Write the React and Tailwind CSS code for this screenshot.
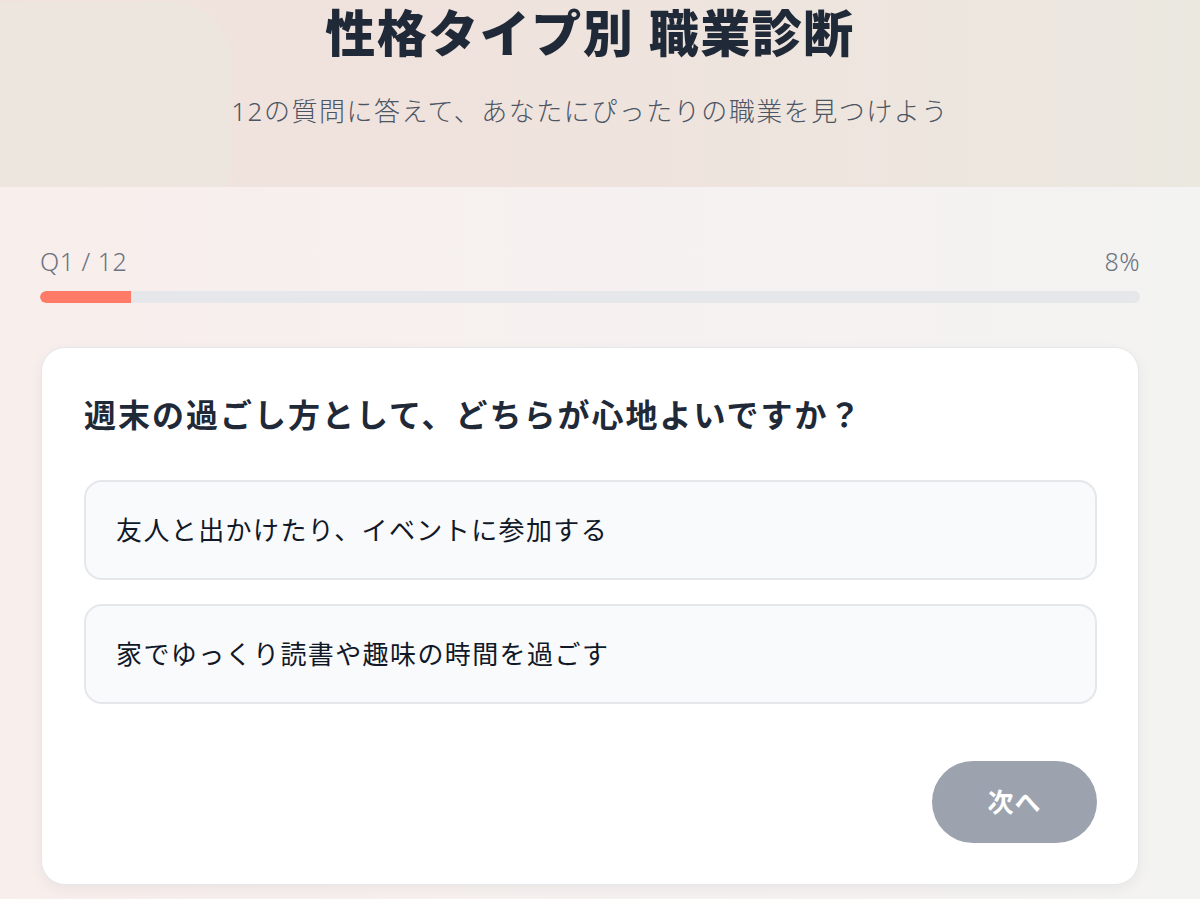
import React from "react";

const FONT = { fontFamily: '"Noto Sans", "Noto Sans CJK JP", sans-serif' };

export default function App() {
  return (
    <div
      className="min-h-[899px] w-full bg-gradient-to-r from-[#f8eeec] via-[#f6f1f0] to-[#f3f3f2] text-[#1f2937]"
      style={FONT}
    >
      <header className="relative overflow-hidden h-[187px] bg-gradient-to-r from-[#f1e2dc] via-[#efe3dd] to-[#ebe8e0]">
        <div className="absolute left-[-40px] top-[2px] h-[200px] w-[272px] rounded-tr-[60px] rounded-br-[40px] bg-[#ece6df]" />
        <div className="relative ml-[40px] w-[1100px] flex flex-col items-center pt-[3px]">
          <h1 className="text-[50px] leading-[60px] font-extrabold tracking-[1.5px] text-[#1f2937]">
            性格タイプ別 職業診断
          </h1>
          <p className="mt-[28px] text-[26px] leading-[40px] font-light tracking-[1.5px] text-[#4b5563]">
            12の質問に答えて、あなたにぴったりの職業を見つけよう
          </p>
        </div>
      </header>

      <main className="px-[40px] pt-[58px] pb-[15px] w-[1180px]">
        <div className="w-[1100px]">
          <div className="flex justify-between text-[25px] leading-[32px] font-light tracking-[0.5px] text-[#6b7280]">
            <span>Q1 / 12</span>
            <span>8%</span>
          </div>
          <div className="mt-[14px] h-[12px] w-full rounded-full bg-[#e5e7eb] overflow-hidden">
            <div className="h-full rounded-l-full bg-[#ff7b68]" style={{ width: "8.3%" }} />
          </div>

          <div className="mt-[44px] ml-[1px] w-[1098px] rounded-[24px] border border-[#e5e7eb] bg-white pt-[43px] pb-[41px] pl-[42px] pr-[41px] shadow-[0_4px_14px_rgba(0,0,0,0.05)]">
            <h2 className="text-[32px] leading-[48px] font-bold tracking-[2px] text-[#1f2937]">
              週末の過ごし方として、どちらが心地よいですか？
            </h2>
            <div className="mt-[41px] flex flex-col gap-[24px]">
              <button className="h-[100px] w-full rounded-[18px] border-2 border-[#e5e7eb] bg-[#f9fafb] pl-[30px] text-left text-[26px] font-normal tracking-[1.4px] text-[#111827]">
                友人と出かけたり、イベントに参加する
              </button>
              <button className="h-[100px] w-full rounded-[18px] border-2 border-[#e5e7eb] bg-[#f9fafb] pl-[30px] text-left text-[26px] font-normal tracking-[1.4px] text-[#111827]">
                家でゆっくり読書や趣味の時間を過ごす
              </button>
            </div>
            <div className="mt-[57px] flex justify-end">
              <button className="h-[82px] w-[165px] rounded-full bg-[#9ca3af] text-[26px] font-bold tracking-[1px] text-white">
                次へ
              </button>
            </div>
          </div>
        </div>
      </main>
    </div>
  );
}
